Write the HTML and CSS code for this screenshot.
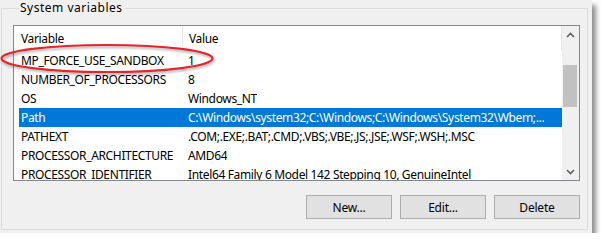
FILE: index.html
```html
<!DOCTYPE html>
<html>
<head>
<meta charset="utf-8">
<link rel="stylesheet" href="styles.css">
</head>
<body>
<div class="window">
  <fieldset class="group">
    <legend class="group-title">System variables</legend>
    <div class="listbox">
      <div class="list-main">
        <div class="list-header">
          <div class="hcell hcell-var">Variable</div>
          <div class="hcell hcell-val">Value</div>
        </div>
        <div class="row"><span class="c1">MP_FORCE_USE_SANDBOX</span><span class="c2">1</span></div>
        <div class="row"><span class="c1">NUMBER_OF_PROCESSORS</span><span class="c2">8</span></div>
        <div class="row"><span class="c1">OS</span><span class="c2">Windows_NT</span></div>
        <div class="row selected"><span class="c1">Path</span><span class="c2">C:\Windows\system32;C:\Windows;C:\Windows\System32\Wbem;...</span></div>
        <div class="row"><span class="c1">PATHEXT</span><span class="c2">.COM;.EXE;.BAT;.CMD;.VBS;.VBE;.JS;.JSE;.WSF;.WSH;.MSC</span></div>
        <div class="row"><span class="c1">PROCESSOR_ARCHITECTURE</span><span class="c2">AMD64</span></div>
        <div class="row"><span class="c1">PROCESSOR_IDENTIFIER</span><span class="c2">Intel64 Family 6 Model 142 Stepping 10, GenuineIntel</span></div>
      </div>
      <div class="scrollbar">
        <div class="sb-btn">
          <svg width="9" height="6" viewBox="0 0 9 6"><path d="M1 5 L4.5 1.5 L8 5" fill="none" stroke="#606060" stroke-width="1.6"/></svg>
        </div>
        <div class="sb-track"><div class="sb-thumb"></div></div>
        <div class="sb-btn">
          <svg width="9" height="6" viewBox="0 0 9 6"><path d="M1 1 L4.5 4.5 L8 1" fill="none" stroke="#606060" stroke-width="1.6"/></svg>
        </div>
      </div>
    </div>
    <div class="buttons">
      <button class="btn">New...</button>
      <button class="btn">Edit...</button>
      <button class="btn">Delete</button>
    </div>
  </fieldset>
  <svg class="annotation" width="220" height="40" viewBox="0 0 220 40">
    <ellipse cx="107" cy="18.5" rx="105.5" ry="13.5" fill="none" stroke="#e3262a" stroke-width="2.2"/>
  </svg>
</div>
</body>
</html>
```

FILE: styles.css
```css
html, body {
  margin: 0;
  padding: 0;
  background: #ffffff;
}
body {
  font-family: "Noto Sans", "Open Sans", sans-serif;
  font-size: 12px;
  letter-spacing: -0.35px;
  color: #000;
}
.window {
  position: relative;
  width: 592px;
  height: 233px;
  box-sizing: border-box;
  padding: 0 4px 0 1px;
  background: #f0f0f0;
  box-shadow: 4px 5px 5px rgba(0, 0, 0, 0.45);
}
.group {
  margin: 0;
  width: 587px;
  height: 230px;
  box-sizing: border-box;
  border: 1px solid #dcdcdc;
  padding: 9px 7px 0 11px;
  min-width: 0;
}
.group-title {
  margin-left: 6px;
  padding: 0 2px 0 1px;
  height: 16px;
  line-height: 16px;
  font-size: 12px;
  letter-spacing: 0.5px;
}
.listbox {
  display: flex;
  height: 156px;
  box-sizing: border-box;
  border: 1px solid #828790;
  background: #fff;
}
.list-main {
  flex: 1;
  min-width: 0;
  overflow: hidden;
}
.list-header {
  display: flex;
  height: 25px;
  border-right: 1px solid #e5e5e5;
}
.hcell {
  line-height: 26px;
  height: 20px;
}
.hcell-var {
  width: 161px;
  padding-left: 7px;
  border-right: 1px solid #e5e5e5;
}
.hcell-val {
  padding-left: 6px;
}
.row {
  display: flex;
  height: 19px;
  line-height: 19px;
  margin-left: 5px;
  white-space: nowrap;
}
.row .c1 {
  width: 166px;
  flex: none;
  padding-left: 2px;
}
.row .c2 {
  padding-left: 1px;
  overflow: hidden;
  text-overflow: ellipsis;
}
.row.selected {
  background: #0078d7;
  color: #fff;
}
.scrollbar {
  width: 17px;
  flex: none;
  display: flex;
  flex-direction: column;
  background: #f0f0f0;
}
.sb-btn {
  height: 17px;
  display: flex;
  align-items: center;
  justify-content: center;
}
.sb-track {
  flex: 1;
  padding-top: 22px;
}
.sb-thumb {
  margin: 0 2px 0 1px;
  height: 42px;
  background: #c1c1c1;
}
.buttons {
  display: flex;
  justify-content: flex-end;
  gap: 8px;
  margin-top: 14px;
}
.btn {
  width: 86px;
  height: 24px;
  box-sizing: border-box;
  border: 1px solid #adadad;
  background: #e1e1e1;
  font-family: "Noto Sans", "Open Sans", sans-serif;
  font-size: 12px;
  letter-spacing: -0.2px;
  color: #000;
  padding: 0;
}
.annotation {
  position: absolute;
  left: 0;
  top: 40px;
  filter: drop-shadow(1px 2px 1px rgba(0, 0, 0, 0.3));
}
```
